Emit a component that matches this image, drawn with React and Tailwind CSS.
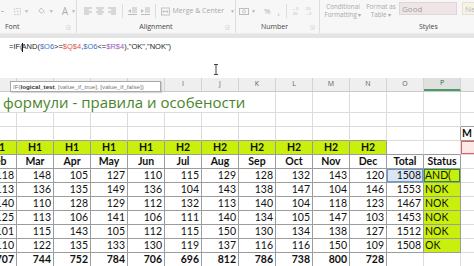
import clsx from "clsx";

const months = ["Feb", "Mar", "Apr", "May", "Jun", "Jul", "Aug", "Sep", "Oct", "Nov", "Dec"];
const halves = ["H1", "H1", "H1", "H1", "H1", "H2", "H2", "H2", "H2", "H2", "H2"];
const data = [
  [118, 148, 105, 127, 110, 115, 129, 128, 132, 143, 120, 1508, "AND("],
  [113, 136, 135, 149, 136, 104, 143, 138, 147, 104, 146, 1553, "NOK"],
  [140, 110, 128, 129, 112, 132, 113, 140, 104, 118, 123, 1467, "NOK"],
  [125, 113, 106, 141, 106, 111, 140, 134, 105, 147, 103, 1453, "NOK"],
  [101, 115, 143, 105, 112, 115, 150, 130, 134, 138, 127, 1512, "NOK"],
  [110, 122, 135, 133, 130, 119, 137, 116, 116, 150, 109, 1508, "OK"],
];
const totals = [707, 744, 752, 784, 706, 696, 812, 786, 738, 800, 728];
const letters = ["D", "E", "F", "G", "H", "I", "J", "K", "L", "M", "N", "O", "P", "Q"];
// D..H sit under the function tooltip
const hiddenLetters = ["D", "E", "F", "G", "H"];

const LIME = "bg-[#c9ef0c]";

// which cells carry the darker table border
const inTable = (r, c) =>
  (r >= 4 && r <= 12 && c >= 0 && c <= 10) ||
  (r >= 5 && r <= 11 && (c === 11 || c === 12)) ||
  (r === 3 && c === 13);

function Cell({ r, c, v, align = "right", bold, bg, ring }) {
  const rd = inTable(r, c) || inTable(r, c + 1);
  const bd = inTable(r, c) || inTable(r + 1, c);
  return (
    <div
      className={clsx(
        "h-[14px] w-[37px] shrink-0 flex items-center overflow-hidden whitespace-nowrap border-r border-b text-[10.5px] leading-none text-[#111]",
        rd ? "border-r-[#9c9c9c]" : "border-r-[#dcdcdc]",
        bd ? "border-b-[#9c9c9c]" : "border-b-[#dcdcdc]",
        align === "right" && "justify-end pr-[2px]",
        align === "center" && "justify-center",
        align === "left" && "justify-start pl-[1px]",
        bold && "font-bold",
        bg,
        ring
      )}
    >
      {v}
    </div>
  );
}

function buildRow(r) {
  const cells = letters.map(() => ({}));
  if (r === 3) cells[13] = { v: "M", bold: true, align: "left" };
  if (r === 4) {
    halves.forEach((h, i) => (cells[i] = { v: h, bold: true, align: "center", bg: LIME }));
    cells[13] = { bg: "bg-[#fde8e8]", ring: "shadow-[inset_0_0_0_1px_#e06060]" };
  }
  if (r === 5) {
    months.forEach((m, i) => (cells[i] = { v: m, bold: true, align: "center" }));
    cells[11] = { v: "Total", bold: true, align: "center" };
    cells[12] = { v: "Status", bold: true, align: "center" };
  }
  if (r >= 6 && r <= 11) {
    const row = data[r - 6];
    row.forEach((v, i) => (cells[i] = { v }));
    cells[12] = { v: row[12], align: "left", bg: LIME };
    if (r === 6) {
      cells[11] = { v: row[11], bg: "bg-[#dbe6f4]", ring: "shadow-[inset_0_0_0_1px_#6a9bd6]" };
      cells[12] = { v: row[12], align: "left", bg: LIME, ring: "shadow-[inset_0_0_0_1px_#2f8a3c]" };
    }
  }
  if (r === 12) totals.forEach((v, i) => (cells[i] = { v, bold: true }));
  return cells;
}

function AlignIcon({ kind }) {
  const rows = kind === "left" ? [[0, 8], [0, 5], [0, 8], [0, 5]] : kind === "center" ? [[0, 8], [1.5, 6.5], [0, 8], [1.5, 6.5]] : [[0, 8], [3, 8], [0, 8], [3, 8]];
  return (
    <svg width="9" height="8" viewBox="0 0 9 8" className="shrink-0">
      {rows.map(([a, b], i) => (
        <line key={i} x1={a} x2={b} y1={1 + i * 2} y2={1 + i * 2} stroke="#b9b9b9" strokeWidth="1" />
      ))}
    </svg>
  );
}

function Caret() {
  return <span className="text-[5px] text-[#b5b5b5] leading-none">▼</span>;
}

function Ribbon() {
  return (
    <div className="h-[33px] bg-[#f7f7f7] flex text-[7px] font-['Open_Sans',sans-serif] text-[#a9a9a9] overflow-hidden">
      {/* Font */}
      <div className="w-[77px] shrink-0 flex flex-col border-r border-[#dedede]">
        <div className="h-[22px] flex items-center gap-[3px] pl-[1px]">
          <span className="w-[4px] h-[1px] bg-[#bdbdbd] mr-[7px]" />
          <svg width="9" height="9" viewBox="0 0 9 9">
            <rect x="0.5" y="0.5" width="8" height="8" fill="none" stroke="#bcbcbc" strokeDasharray="1 1" />
            <line x1="4.5" y1="0" x2="4.5" y2="9" stroke="#c8c8c8" strokeDasharray="1 1" />
            <line x1="0" y1="4.5" x2="9" y2="4.5" stroke="#c8c8c8" strokeDasharray="1 1" />
          </svg>
          <Caret />
          <svg width="10" height="10" viewBox="0 0 10 10" className="ml-[6px]">
            <path d="M4 1 L8 5 L5 8 L1 5 Z" fill="none" stroke="#b5b5b5" />
            <path d="M8.5 6 q1 1.5 0 2.5 q-1 -1 0 -2.5" fill="#c5c5c5" />
          </svg>
          <Caret />
          <span className="ml-[5px] text-[10px] leading-none text-[#acacac]">A</span>
          <Caret />
        </div>
        <div className="h-[11px] flex items-center justify-between px-[5px] text-[#474747]">
          <span>Font</span>
          <span className="text-[5px] text-[#b0b0b0]">◲</span>
        </div>
      </div>
      {/* Alignment */}
      <div className="w-[159px] shrink-0 flex flex-col border-r border-[#dedede]">
        <div className="h-[22px] flex items-center pl-[7px]">
          <div className="flex gap-[3px]">
            <AlignIcon kind="left" />
            <AlignIcon kind="center" />
            <AlignIcon kind="right" />
          </div>
          <span className="w-px h-[14px] bg-[#dcdcdc] mx-[5px]" />
          <div className="flex gap-[4px]">
            <svg width="9" height="8" viewBox="0 0 9 8">
              <path d="M0 4 L3 2 L3 6 Z" fill="#bdbdbd" />
              <line x1="4" x2="9" y1="1" y2="1" stroke="#bdbdbd" />
              <line x1="4" x2="9" y1="3" y2="3" stroke="#bdbdbd" />
              <line x1="4" x2="9" y1="5" y2="5" stroke="#bdbdbd" />
              <line x1="0" x2="9" y1="7.5" y2="7.5" stroke="#bdbdbd" />
            </svg>
            <svg width="9" height="8" viewBox="0 0 9 8">
              <path d="M3 4 L0 2 L0 6 Z" fill="#bdbdbd" />
              <line x1="4" x2="9" y1="1" y2="1" stroke="#bdbdbd" />
              <line x1="4" x2="9" y1="3" y2="3" stroke="#bdbdbd" />
              <line x1="4" x2="9" y1="5" y2="5" stroke="#bdbdbd" />
              <line x1="0" x2="9" y1="7.5" y2="7.5" stroke="#bdbdbd" />
            </svg>
          </div>
          <span className="w-px h-[14px] bg-[#dcdcdc] mx-[5px]" />
          <svg width="10" height="9" viewBox="0 0 10 9" className="mr-[3px]">
            <rect x="0.5" y="0.5" width="9" height="8" fill="none" stroke="#bdbdbd" />
            <path d="M2 4.5 H8 M2 4.5 L3.5 3 M2 4.5 L3.5 6 M8 4.5 L6.5 3 M8 4.5 L6.5 6" stroke="#bdbdbd" fill="none" />
          </svg>
          <span className="whitespace-nowrap">Merge &amp; Center</span>
          <span className="ml-[6px]"><Caret /></span>
        </div>
        <div className="h-[11px] relative flex items-center justify-center text-[#474747]">
          <span>Alignment</span>
          <span className="absolute right-[5px] text-[5px] text-[#b0b0b0]">◲</span>
        </div>
      </div>
      {/* Number */}
      <div className="w-[84px] shrink-0 flex flex-col border-r border-[#dedede]">
        <div className="h-[22px] flex items-center pl-[3px]">
          <svg width="10" height="9" viewBox="0 0 10 9">
            <rect x="0.5" y="1.5" width="9" height="6" fill="none" stroke="#bdbdbd" />
            <circle cx="5" cy="4.5" r="1.5" fill="none" stroke="#c5c5c5" />
          </svg>
          <span className="ml-[2px]"><Caret /></span>
          <span className="ml-[8px] text-[8px] text-[#b0b0b0]">%</span>
          <span className="ml-[7px] text-[9px] text-[#b0b0b0] leading-none">,</span>
          <span className="w-px h-[14px] bg-[#dcdcdc] ml-[6px] mr-[5px]" />
          <svg width="9" height="10" viewBox="0 0 9 10">
            <text x="0" y="4" fontSize="4" fill="#bbb">←0</text>
            <text x="0" y="9" fontSize="4" fill="#bbb">.00</text>
          </svg>
          <svg width="9" height="10" viewBox="0 0 9 10" className="ml-[4px]">
            <text x="0" y="4" fontSize="4" fill="#bbb">.00</text>
            <text x="0" y="9" fontSize="4" fill="#bbb">→0</text>
          </svg>
        </div>
        <div className="h-[11px] relative flex items-center text-[#474747] pl-[25px]">
          <span>Number</span>
          <span className="absolute right-[4px] text-[5px] text-[#b0b0b0]">◲</span>
        </div>
      </div>
      {/* Styles */}
      <div className="flex-1 flex flex-col min-w-0">
        <div className="h-[22px] flex items-start pl-[4px] pt-[3px]">
          <div className="w-[38px] shrink-0 flex flex-col leading-[8px] text-center whitespace-nowrap text-[6.3px]">
            <span>Conditional</span>
            <span>Formatting ▾</span>
          </div>
          <div className="w-[32px] ml-[3px] shrink-0 flex flex-col leading-[8px] text-center whitespace-nowrap text-[6.3px]">
            <span>Format as</span>
            <span>Table ▾</span>
          </div>
          <div className="ml-[2px] -mt-[1px] w-[58px] shrink-0 h-[13px] bg-[#efe4e6] border border-[#e0d6d8] flex items-center pl-[2px] text-[8px] text-[#9aa59a]">
            Good
          </div>
          <div className="ml-[5px] -mt-[1px] w-[30px] shrink-0 h-[13px] bg-[#f5f2e6] border border-[#e5e1d2] flex items-center pl-[2px] text-[8px] text-[#bbb] overflow-hidden">
            Neutral
          </div>
        </div>
        <div className="h-[11px] flex items-center text-[#474747] pl-[99px]">
          <span>Styles</span>
        </div>
      </div>
    </div>
  );
}

function FormulaBar() {
  return (
    <div className="h-[40px] bg-white pl-[9px] pt-[3px] font-['Liberation_Sans',sans-serif] text-[7.5px] text-[#222] whitespace-nowrap">
      <span>=IF(</span>
      <span className="inline-block w-[1px] h-[9px] bg-[#111] align-middle -mx-[1px]" />
      <span>AND(</span>
      <span className="text-[#4472c4]">$O6</span>
      <span>&gt;=</span>
      <span className="text-[#d9534f]">$Q$4</span>
      <span>,</span>
      <span className="text-[#4472c4]">$O6</span>
      <span>&lt;=</span>
      <span className="text-[#9a5cb4]">$R$4</span>
      <span>),"OK","NOK")</span>
    </div>
  );
}

function Sheet() {
  return (
    <div className="overflow-hidden font-['Lato',sans-serif]">
      <div className="-ml-[20px] w-[518px]">
        {/* column letters */}
        <div className="flex h-[14px] bg-[#efefef] border-b border-[#c9c9c9]">
          {letters.map((l) => (
            <div
              key={l}
              className={clsx(
                "w-[37px] shrink-0 flex items-center justify-center border-r border-[#d3d3d3] text-[7px] font-['Open_Sans',sans-serif]",
                l === "P" ? "bg-[#e0e0e0] text-[#217346] border-b-2 border-b-[#4a9c6a]" : "text-[#616161]"
              )}
            >
              {hiddenLetters.includes(l) ? "" : l}
            </div>
          ))}
        </div>
        {/* title row */}
        <div className="flex h-[21px]">
          <div className="w-[296px] shrink-0 border-r border-b border-[#dcdcdc] flex items-center pl-[23px] whitespace-nowrap font-['Open_Sans',sans-serif] text-[15px] text-[#4a852c] leading-none">
            формули - правила и особености
          </div>
          {letters.slice(8).map((l) => (
            <div key={l} className="w-[37px] shrink-0 border-r border-b border-[#dcdcdc]" />
          ))}
        </div>
        {[2, 3, 4, 5, 6, 7, 8, 9, 10, 11, 12].map((r) => (
          <div key={r} className="flex">
            {buildRow(r).map((cell, c) => (
              <Cell key={c} r={r} c={c} {...cell} />
            ))}
          </div>
        ))}
      </div>
    </div>
  );
}

export default function App() {
  return (
    <div className="relative w-[474px] h-[266px] overflow-hidden bg-white">
      <Ribbon />
      <div className="h-[5px] bg-[#e4e4e4] border-t border-[#ececec]" />
      <FormulaBar />
      <Sheet />
      {/* function tooltip */}
      <div className="absolute left-[10px] top-[81px] w-[151px] h-[11px] bg-white border border-[#a8a8a8] flex items-center pl-[2px] text-[6.2px] font-['Liberation_Sans',sans-serif] text-[#777] whitespace-nowrap shadow-[1px_1px_1px_rgba(0,0,0,0.15)]">
        IF(<span className="font-bold text-[#333]">logical_test</span>, [value_if_true], [value_if_false])
      </div>
      {/* mouse I-beam */}
      <svg className="absolute left-[213px] top-[64px]" width="6" height="11" viewBox="0 0 6 11">
        <path d="M1 0.5 H5 M3 0.5 V10.5 M1 10.5 H5" stroke="#444" strokeWidth="1" fill="none" />
      </svg>
    </div>
  );
}
